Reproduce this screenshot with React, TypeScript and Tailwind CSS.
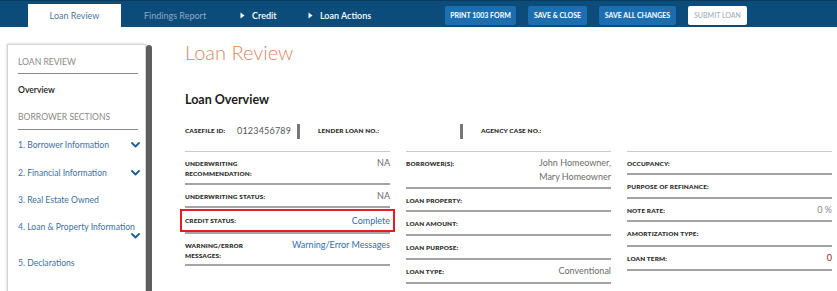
import React from "react";

const Chevron = () => (
  <svg width="9" height="6" viewBox="0 0 9 6" className="shrink-0">
    <path d="M1 1 L4.5 4.5 L8 1" fill="none" stroke="#1d5d94" strokeWidth="1.8" strokeLinecap="round" strokeLinejoin="round" />
  </svg>
);

const Tri = () => (
  <svg width="5" height="7" viewBox="0 0 5 7" className="mr-[7px]">
    <path d="M0.5 0.5 L4.5 3.5 L0.5 6.5 Z" fill="#ffffff" />
  </svg>
);

const Label = ({ children }: { children: React.ReactNode }) => (
  <div className="text-[6.4px] font-extrabold uppercase tracking-[0.15px] text-[#333] leading-[10px] whitespace-nowrap">{children}</div>
);

type Row = { h: string; label: React.ReactNode; value?: React.ReactNode; valueCls?: string; red?: boolean };

const Col = ({ rows }: { rows: Row[] }) => (
  <div className="border-t border-[#c9c9c9]">
    {rows.map((r, i) => (
      <div key={i} className={`${r.h} border-b-2 border-[#a3a3a3]`}>
        {r.red ? (
          <div className="-mx-[5px] mt-[1px] h-[23px] border-2 border-[#e41e1e] flex items-center justify-between px-[3px]">
            <Label>{r.label}</Label>
            <div className={r.valueCls}>{r.value}</div>
          </div>
        ) : (
          <div className="flex justify-between pt-[7px]">
            <Label>{r.label}</Label>
            <div className={r.valueCls}>{r.value}</div>
          </div>
        )}
      </div>
    ))}
  </div>
);

export default function App() {
  const gray = "text-[9px] text-[#6b6b6b] text-right leading-[14px] -mt-[3px]";
  const blue = "text-[9px] text-[#2f6fae] text-right leading-[14px]";
  return (
    <div className="w-[837px] h-[291px] overflow-hidden bg-white" style={{ fontFamily: "Lato, 'Open Sans', sans-serif" }}>
      {/* top bar */}
      <div className="h-[27px] bg-[#0c4c7b] flex items-end pl-[28px] border-t border-[#093a60]">
        <div className="w-[93px] h-[23px] bg-white flex items-center justify-center text-[9px] text-[#4f7896]">Loan Review</div>
        <div className="w-[96px] h-[23px] flex items-center ml-[23px] text-[9px] text-[#8eaac2]">Findings Report</div>
        <div className="w-[68px] h-[23px] flex items-center text-[9px] font-semibold text-white"><Tri />Credit</div>
        <div className="w-[137px] h-[23px] flex items-center text-[9px] font-semibold text-white"><Tri />Loan Actions</div>
        <div className="flex self-start mt-[5px] gap-[12px]">
          <div className="w-[71px] h-[19px] rounded-[2px] bg-[#1b6fb0] flex items-center justify-center text-[7px] font-bold text-white">PRINT 1003 FORM</div>
          <div className="w-[59px] h-[19px] rounded-[2px] bg-[#1b6fb0] flex items-center justify-center text-[7px] font-bold text-white">SAVE &amp; CLOSE</div>
          <div className="w-[77px] h-[19px] rounded-[2px] bg-[#1b6fb0] flex items-center justify-center text-[7px] font-bold text-white">SAVE ALL CHANGES</div>
          <div className="w-[59px] h-[19px] rounded-[2px] bg-white flex items-center justify-center text-[7px] font-semibold text-[#a9b4bf]">SUBMIT LOAN</div>
        </div>
      </div>

      <div className="flex">
        {/* sidebar */}
        <div className="flex mt-[17px] ml-[7px] h-[260px]">
          <div className="w-[139px] bg-white border border-[#d4d4d4] shadow-[0_0_3px_rgba(0,0,0,0.2)] pl-[10px] pr-[5px] pt-[11px] text-[8.6px]">
            <div className="text-[#8a8a8a] leading-[12px] pb-[5px] border-b border-[#8a8a8a] mr-[2px]">LOAN REVIEW</div>
            <div className="text-[#222] font-semibold mt-[10px] leading-[12px]">Overview</div>
            <div className="text-[#8a8a8a] leading-[12px] mt-[15px] pb-[6px] border-b border-[#8a8a8a] mr-[2px]">BORROWER SECTIONS</div>
            <div className="flex justify-between items-center mt-[9px] leading-[12px] text-[#3d6f9f]">1. Borrower Information<Chevron /></div>
            <div className="flex justify-between items-center mt-[16px] leading-[12px] text-[#3d6f9f]">2. Financial Information<Chevron /></div>
            <div className="mt-[15px] leading-[12px] text-[#3d6f9f]">3. Real Estate Owned</div>
            <div className="mt-[15px] leading-[12px] text-[#3d6f9f] whitespace-nowrap">4. Loan &amp; Property Information</div>
            <div className="flex justify-end"><Chevron /></div>
            <div className="mt-[18px] leading-[12px] text-[#3d6f9f]">5. Declarations</div>
          </div>
          <div className="w-[6px] bg-[#5e5e5e] rounded-t-[3px] mt-[1px]" />
        </div>

        {/* main */}
        <div className="ml-[33px] w-[648px]">
          <div className="mt-[13px] text-[20px] font-light text-[#d6895f] leading-[24px]">Loan Review</div>
          <div className="mt-[28px] text-[12.5px] font-bold text-[#1c1c1c] leading-[16px]">Loan Overview</div>
          <div className="mt-[15px] flex items-center h-[16px]">
            <div className="w-[52px]"><Label>Casefile ID:</Label></div>
            <div className="w-[60px] text-[9px] text-[#555] tracking-[0.2px]">0123456789</div>
            <div className="w-[3px] h-[15px] bg-[#777]" />
            <div className="ml-[18px] w-[142px]"><Label>Lender Loan No.:</Label></div>
            <div className="w-[3px] h-[15px] bg-[#777]" />
            <div className="ml-[18px]"><Label>Agency Case No.:</Label></div>
          </div>
          <div className="mt-[12px] grid grid-cols-[205px_205px_205px] gap-x-[16px]">
            <Col
              rows={[
                { h: "h-[33px]", label: <>Underwriting<br />Recommendation:</>, value: "NA", valueCls: gray },
                { h: "h-[23px]", label: "Underwriting Status:", value: "NA", valueCls: gray },
                { h: "h-[25px]", label: "Credit Status:", value: "Complete", valueCls: blue, red: true },
                { h: "h-[32px]", label: <>Warning/Error<br />Messages:</>, value: "Warning/Error Messages", valueCls: blue + " -mt-[3px]" },
              ]}
            />
            <Col
              rows={[
                { h: "h-[37px]", label: "Borrower(s):", value: <>John Homeowner,<br />Mary Homeowner</>, valueCls: gray },
                { h: "h-[23px]", label: "Loan Property:" },
                { h: "h-[24px]", label: "Loan Amount:" },
                { h: "h-[24px]", label: "Loan Purpose:" },
                { h: "h-[24px]", label: "Loan Type:", value: "Conventional", valueCls: gray },
              ]}
            />
            <Col
              rows={[
                { h: "h-[23px]", label: "Occupancy:" },
                { h: "h-[24px]", label: "Purpose of Refinance:" },
                { h: "h-[23px]", label: "Note Rate:", value: "0 %", valueCls: gray + " text-[#8a8a8a]" },
                { h: "h-[25px]", label: "Amortization Type:" },
                { h: "h-[24px]", label: "Loan Term:", value: "0", valueCls: "text-[9px] text-[#8b2c2c] leading-[14px] -mt-[3px]" },
              ]}
            />
          </div>
        </div>
      </div>
    </div>
  );
}
